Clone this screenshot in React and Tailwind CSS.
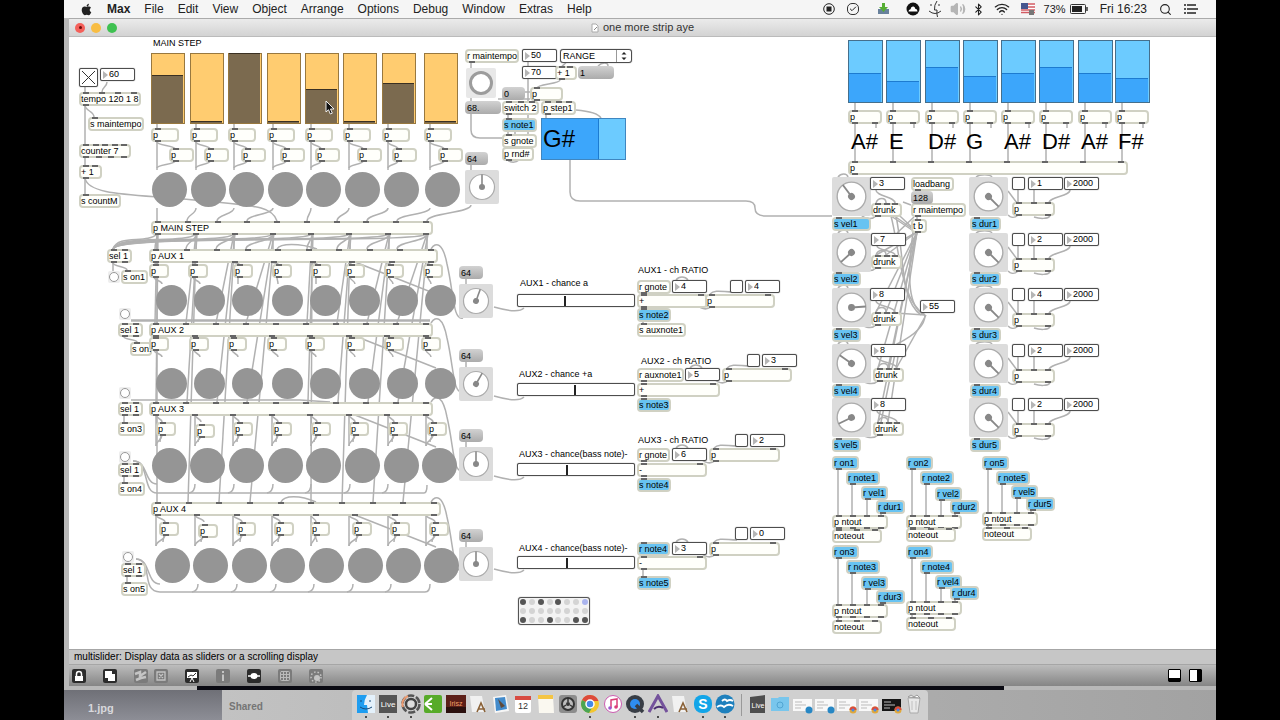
import React, { useState } from 'react';
import { Bluetooth, Check, Grid3x3, Search, Volume2, Wifi } from 'lucide-react';
import { FaApple } from 'react-icons/fa';

// patch coordinates of the top left corner of the visible canvas
const ORIGIN = { x: 69, y: 37 };

const place = (x, y, w, h) => ({ left: x - ORIGIN.x, top: y - ORIGIN.y, width: w, height: h });

const MENUS = ['File', 'Edit', 'View', 'Object', 'Arrange', 'Options', 'Debug', 'Window', 'Extras', 'Help'];

const STEP_X = [151, 190, 228, 267, 305, 343, 382, 424];
const STEP_LEVELS = [48, 2, 70, 2, 34, 2, 40, 2];
const STEP_P2_X = [169, 204, 241, 280, 315, 357, 392, 438];
const NOTE_X = [848, 886, 925, 963, 1001, 1039, 1078, 1115];
const NOTE_LEVELS = [29, 21, 35, 26, 29, 35, 29, 24];
const NOTES = ['A#', 'E', 'D#', 'G', 'A#', 'D#', 'A#', 'F#'];

const CIRCLE_ROWS = [
  { y: 190, d: 35, xs: [170, 209, 247, 286, 324, 363, 402, 443] },
  { y: 301, d: 31, xs: [172, 210, 248, 288, 326, 365, 403, 441] },
  { y: 384, d: 31, xs: [172, 210, 248, 288, 326, 365, 403, 441] },
  { y: 466, d: 35, xs: [170, 208, 247, 286, 324, 363, 402, 440] },
  { y: 566, d: 35, xs: [173, 211, 250, 288, 327, 366, 404, 442] },
];

const P_ROWS = [
  { y: 264, xs: [149, 188, 233, 272, 311, 345, 384, 423] },
  { y: 337, xs: [149, 189, 227, 267, 305, 345, 384, 421] },
  { y: 422, xs: [156, 195, 233, 272, 311, 349, 388, 427] },
  { y: 522, xs: [159, 198, 236, 274, 310, 352, 390, 429] },
];

// text, x, y, width, inlets, outlets
const BOXES = [
  ['tempo 120 1 8', 79, 92, 62, 4, 1],
  ['s maintempo', 88, 117, 56, 1, 0],
  ['counter 7', 79, 144, 52, 5, 4],
  ['+ 1', 79, 165, 23, 2, 1],
  ['s countM', 79, 194, 42, 1, 0],
  ['sel 1', 107, 249, 25, 2, 2],
  ['s on1', 121, 270, 27, 1, 0],
  ['sel 1', 118, 323, 25, 2, 2],
  ['s on.', 130, 342, 22, 1, 0],
  ['sel 1', 118, 402, 25, 2, 2],
  ['s on3', 118, 422, 27, 1, 0],
  ['sel 1', 118, 463, 25, 2, 2],
  ['s on4', 118, 482, 27, 1, 0],
  ['sel 1', 121, 563, 25, 2, 2],
  ['s on5', 121, 582, 27, 1, 0],
  ['p MAIN STEP', 151, 221, 282, 10, 8],
  ['p AUX 1', 149, 249, 289, 10, 8],
  ['p AUX 2', 149, 323, 284, 10, 8],
  ['p AUX 3', 149, 402, 284, 10, 8],
  ['p AUX 4', 151, 502, 290, 10, 8],
  ['r maintempo', 465, 49, 54, 0, 1],
  ['p', 530, 87, 33, 1, 1],
  ['switch 2', 502, 101, 37, 3, 1],
  ['p step1', 541, 101, 35, 3, 1],
  ['s gnote', 502, 134, 35, 1, 0],
  ['p rnd#', 502, 147, 32, 0, 1],
  ['r gnote', 637, 280, 34, 0, 1],
  ['+', 637, 294, 71, 2, 1],
  ['p', 705, 294, 70, 2, 1],
  ['s auxnote1', 637, 323, 49, 1, 0],
  ['r auxnote1', 637, 368, 47, 0, 1],
  ['+', 637, 383, 83, 2, 1],
  ['p', 722, 368, 70, 2, 1],
  ['r gnote', 637, 448, 33, 0, 1],
  ['-', 637, 463, 70, 2, 1],
  ['p', 709, 448, 71, 2, 1],
  ['-', 637, 556, 70, 2, 1],
  ['p', 709, 542, 71, 2, 1],
  ['p', 848, 161, 280, 8, 1],
  ['loadbang', 911, 177, 43, 0, 1],
  ['r maintempo', 911, 203, 55, 0, 1],
  ['t b', 911, 219, 16, 1, 1],
];

const BLUE_BOXES = [
  ['s note1', 502, 118, 35],
  ['s note2', 637, 308, 34],
  ['s note3', 637, 398, 34],
  ['s note4', 637, 478, 34],
  ['s note5', 637, 576, 34],
  ['r note4', 637, 542, 33],
];

const NUMBERS = [
  ['60', 100, 68, 'tempo'],
  ['50', 522, 49, 'low'],
  ['70', 522, 66, 'high'],
  ['4', 672, 280, 'aux1 offset'],
  ['4', 745, 280, 'aux1 ratio'],
  ['5', 685, 368, 'aux2 offset'],
  ['3', 762, 354, 'aux2 ratio'],
  ['6', 672, 448, 'aux3 offset'],
  ['2', 750, 434, 'aux3 ratio'],
  ['3', 672, 542, 'aux4 offset'],
  ['0', 750, 527, 'aux4 ratio'],
  ['55', 920, 300, 'drunk size'],
];

const TOGGLES = [[730, 280], [747, 354], [735, 434], [735, 527]];

const MESSAGES = [
  ['1', 578, 66, 36],
  ['0', 502, 87, 23],
  ['68.', 465, 101, 36],
  ['64', 465, 152, 23],
  ['64', 459, 266, 24],
  ['64', 459, 349, 24],
  ['64', 459, 429, 24],
  ['64', 459, 529, 24],
  ['128', 911, 191, 22],
];

const COMMENTS = [
  ['MAIN STEP', 153, 37],
  ['AUX1 - chance a', 520, 277],
  ['AUX2 - chance +a', 519, 368],
  ['AUX3 - chance(bass note)-', 519, 448],
  ['AUX4 - chance(bass note)-', 519, 542],
  ['AUX1 - ch RATIO', 638, 264],
  ['AUX2 - ch RATIO', 641, 355],
  ['AUX3 - ch RATIO', 638, 434],
];

const CHANCES = [
  { y: 294, value: 40 },
  { y: 383, value: 49 },
  { y: 463, value: 42 },
  { y: 556, value: 42 },
];

const DIALS = [
  [465, 170, 34, 0],
  [459, 284, 34, 20],
  [459, 367, 34, 30],
  [459, 447, 34, 0],
  [459, 547, 34, 0],
];

const VOICES = [
  { y: 177, vel: '3', nx: 870, dx: 871, drunk: 203, send: 217, angle: -37, dur: '1', sw: 39 },
  { y: 233, vel: '7', nx: 871, dx: 871, drunk: 255, send: 272, angle: -132, dur: '2', sw: 29 },
  { y: 288, vel: '8', nx: 870, dx: 871, drunk: 312, send: 328, angle: 86, dur: '4', sw: 29 },
  { y: 344, vel: '8', nx: 871, dx: 873, drunk: 368, send: 384, angle: -55, dur: '2', sw: 29 },
  { y: 398, vel: '8', nx: 871, dx: 873, drunk: 422, send: 438, angle: -116, dur: '2', sw: 29 },
];

const OUTPUTS = [
  { n: 1, x: 832, ys: [456, 471, 486, 500, 515, 529] },
  { n: 2, x: 906, ys: [456, 471, 487, 500, 515, 528] },
  { n: 5, x: 982, ys: [456, 471, 485, 497, 512, 527] },
  { n: 3, x: 832, ys: [545, 560, 576, 590, 604, 620] },
  { n: 4, x: 906, ys: [545, 560, 575, 586, 601, 617] },
];

const SMALL_BANGS = [[114, 277], [125, 314], [125, 393], [125, 457], [128, 557]];

const MATRIX = ['10101002', '00000000', '10010011'];

// a cord that leaves and enters vertically
const cord = (x1, y1, x2, y2, d = (y2 - y1) / 2) => `M${x1} ${y1}C${x1} ${y1 + d} ${x2} ${y2 - d} ${x2} ${y2}`;

const MAIN_OUT = [157, 196, 234, 273, 312, 350, 389, 427];
const AUX_IN = [155, 186, 216, 246, 307, 337, 367, 397];
const AUX4_IN = [157, 188, 219, 250, 311, 342, 373, 403];

function buildCords() {
  const c = [];
  c.push('M85 87V92', cord(107, 82, 102, 92), 'M85 105V144', cord(85, 105, 94, 117), 'M85 157V165M85 178V194');
  c.push('M85 178C88 196 135 194 194 200S272 205 277 221');
  STEP_X.forEach((x, i) => {
    const p2 = STEP_P2_X[i] + 6;
    c.push(`M${x + 6} 124V129M${x + 6} 142V170`, cord(x + 6, 142, p2, 149), cord(p2, 161, x + 6, 168));
    c.push(cord(x + 6, 208, [157, 187, 217, 247, 307, 337, 367, 397][i], 221));
    c.push(`M${MAIN_OUT[i]} 234L${MAIN_OUT[i]} 263`);
    c.push(`M${MAIN_OUT[i]} 234C${MAIN_OUT[i] - 10} 244 118 234 113 249`);
    c.push(cord(MAIN_OUT[i], 234, AUX_IN[i], 249));
    c.push(`M${MAIN_OUT[i]} 234L${AUX_IN[i]} 323`, `M${MAIN_OUT[i] + 1} 234L${AUX_IN[i] + 1} 402`, `M${MAIN_OUT[i]} 249L${AUX4_IN[i]} 502`);
  });
  c.push(cord(471, 205, 427, 221));
  P_ROWS.forEach((r, k) => {
    const top = [262, 336, 415, 515][k];
    r.xs.forEach((x, i) => {
      const cx = CIRCLE_ROWS[k + 1].xs[i] - 10;
      const out = MAIN_OUT[i] - 1;
      c.push(cord(out, top, x + 6, r.y), cord(x + 5, r.y + 13, cx, r.y + 20));
      if (k > 1) c.push(`M${out} ${top}V${r.y + 24}`, cord(x + 6, r.y + 13, out, r.y + 24));
    });
    const d = [249, 323, 402, 502][k];
    c.push(`M355 ${top}L436 ${top + 32}`);
    c.push(`M431 ${d}C436 ${d - 8} 443 ${d - 6} 447 ${d + 15}C454 ${d + 45} 453 ${d + 72} 463 ${d + 69}`);
    c.push(`M494 ${CHANCES[k].y + 13}C508 ${CHANCES[k].y + 17} 520 ${CHANCES[k].y + 18} 524 ${CHANCES[k].y + 14}`);
    c.push(`M466 ${DIALS[k + 1][1] - 6}v6`);
    const p = BOXES.filter((b) => b[0] === 'p' && b[1] > 700 && b[1] < 730)[k];
    c.push(`M${p[1] + 5} ${p[2]}C${p[1] + 10} ${p[2] - 5} ${p[1] + 18} ${p[2] - 2} ${p[1] + 28} ${p[2] - 2}`);
    c.push(`M${p[1] + 6} ${p[2] + 13}C${p[1]} ${p[2] + 17} ${p[1] - 10} ${p[2] + 14} ${p[1] - 8} ${p[2] + 5}`);
  });
  // feedback from the circles to the sel objects
  c.push('M131 320H430M131 321H430M131 400H300L330 402', 'M133 461C148 460 144 484 157 484', 'M133 461C150 461 142 493 157 493H424Q427 493 427 485');
  c.push('M136 559C151 559 146 584 160 584', 'M136 559C154 560 140 592 160 592H425Q430 592 430 584');
  [195, 234, 273, 311, 350, 388].forEach((x) => c.push(`M${x} 484Q${x} 492 ${x - 6} 493`, `M${x + 3} 584Q${x + 3} 591 ${x - 3} 592`));
  c.push('M277 249C280 243 300 243 317 249', 'M281 502C284 495 300 495 316 502');
  c.push(cord(113, 263, 113, 272), cord(113, 263, 127, 270), cord(124, 337, 137, 342), 'M124 415V422M124 476V482M127 576V582');
  // note picker
  c.push('M471 62V68', 'M471 98V101M498 99H530', 'M471 114V130Q471 138 480 138H502', 'M471 165V170', 'M528 62V101', cord(566, 62, 562, 67));
  c.push(cord(560, 80, 537, 88), 'M598 66C602 62 608 62 608 66', 'M576 110C588 111 598 113 601 118', 'M508 115V134M515 131V134M528 115V134', 'M508 160C510 163 516 163 519 160', 'M546 115V118', 'M525 92H530');
  c.push('M570 160V192Q570 201 580 201H746Q755 201 755 208Q755 216 766 216H832');
  c.push('M646 307V308M643 569V576M643 320V324');
  [[683, 280], [697, 368], [683, 448], [683, 542]].forEach(([x, y]) => c.push(`M${x - 7} ${y}C${x - 4} ${y - 4} ${x + 2} ${y - 4} ${x + 5} ${y}`));
  NOTE_X.forEach((x) => c.push(`M${x + 7} 103V161M${x + 28} 123v5`));
  VOICES.forEach((v) => {
    c.push(cord(v.nx + 6, v.y + 13, v.dx + 24, v.drunk), `M${v.dx + 5} ${v.drunk}C${v.dx + 7} ${v.drunk - 6} ${v.dx + 15} ${v.drunk - 6} ${v.dx + 15} ${v.drunk}`);
    c.push(`M${v.dx + 5} ${v.drunk + 13}C${v.dx} ${v.drunk + 18} 862 ${v.drunk + 15} 860 ${v.drunk + 10}`);
    c.push(`M1018 ${v.y + 13}V${v.y + 26}M1034 ${v.y + 13}V${v.y + 26}M1008 ${v.y + 14}L1017 ${v.y + 26}`);
    c.push(cord(1070, v.y + 13, 1049, v.y + 26), `M1018 ${v.y + 38}C1014 ${v.y + 42} 1010 ${v.y + 40} 1008 ${v.y + 38}M1034 ${v.y + 40}C1040 ${v.y + 42} 1048 ${v.y + 42} 1050 ${v.y + 39}`);
    c.push(`M838 ${v.y}C841 ${v.y - 4} 847 ${v.y - 4} 848 ${v.y}M976 ${v.y}C980 ${v.y - 3} 990 ${v.y - 3} 992 ${v.y}`);
    c.push(`M917 232L${v.dx + 5} ${v.drunk}`, `M917 232L${v.dx + 15} ${v.drunk}`);
  });
  c.push('M917 190V203', 'M917 216V219', 'M891 216L912 230M896 216C905 260 900 300 921 315', 'M891 216C900 250 900 300 925 315', 'M925 315C925 330 905 340 897 344L881 422', 'M926 315L897 367', 'M925 315L895 313', 'M876 299H903', 'M913 232C905 290 912 310 925 315', 'M903 202L911 205', 'M897 233L914 217');
  OUTPUTS.forEach(({ x, ys }) => {
    [6, 20, 35, 49].forEach((dx, i) => c.push(`M${x + dx} ${ys[i] + 13}V${ys[4]}`));
    c.push(`M${x + 6} ${ys[4] + 13}V${ys[5]}`);
  });
  return c;
}

const CORDS = buildCords();

function Tabs({ count, edge }) {
  if (!count) return null;
  return (
    <div className={`absolute left-[2px] right-[2px] flex justify-between pointer-events-none ${edge === 'in' ? '-top-[2px]' : '-bottom-[2px]'}`}>
      {Array.from({ length: count }, (_, i) => <span key={i} className="w-[6px] h-[2px] bg-[#666]" />)}
    </div>
  );
}

function Box({ text, x, y, w, ins = 0, outs = 0, blue }) {
  return (
    <div
      className={`absolute rounded-[4px] border-2 border-[#d0d1c3] text-[9px] leading-[10px] whitespace-nowrap ${blue ? 'bg-[#68c3f2]' : 'bg-[#fffffb]'}`}
      style={place(x, y, w, 14)}
    >
      {text}
      <Tabs count={ins} edge="in" />
      <Tabs count={outs} edge="out" />
    </div>
  );
}

function NumberBox({ value, x, y, label }) {
  const [val, setVal] = useState(value);
  return (
    <div className="absolute bg-white border border-[#4d4d4d] rounded-[2px] flex items-center shadow-[0_0_1px_#555]" style={place(x, y, 35, 13)}>
      <svg viewBox="0 0 5 8" className="w-[5px] h-[8px] ml-[2px] shrink-0"><path d="M0 0L5 4L0 8Z" fill="#b5b5b5" /></svg>
      <input
        type="text"
        aria-label={label}
        value={val}
        onChange={(e) => setVal(e.target.value)}
        className="w-full min-w-0 h-[11px] pl-px text-[9px] leading-[11px] bg-transparent outline-none"
      />
    </div>
  );
}

function Message({ text, x, y, w }) {
  return (
    <button className="absolute rounded-[4px] bg-linear-to-b from-[#d2d2d2] to-[#ababab] text-left text-[9px] leading-[12px] pl-[2px]" style={place(x, y, w, 13)}>
      {text}
    </button>
  );
}

function Toggle({ x, y, size, label, crossed }) {
  return (
    <div className="absolute" style={place(x, y, size, size)}>
      <input type="checkbox" aria-label={label} defaultChecked={crossed} className="appearance-none block w-full h-full bg-white border border-[#4d4d4d] rounded-[2px] shadow-[0_0_1px_#555]" />
      {crossed && (
        <svg viewBox="0 0 19 19" className="absolute inset-0 pointer-events-none"><path d="M3 3L16 16M16 3L3 16" stroke="#333" strokeWidth="1" /></svg>
      )}
    </div>
  );
}

function Dial({ x, y, size, angle, label }) {
  return (
    <div className="absolute bg-[#dcdcdc] rounded-[2px]" style={place(x, y, size, size)}>
      <svg viewBox="0 0 34 34" className="w-full h-full">
        <circle cx="17" cy="17" r="12.5" fill="#fff" stroke="#ababab" strokeWidth="1.2" />
        <g transform={`rotate(${angle} 17 17)`}>
          <path d="M17 17V4.5" stroke="#888" strokeWidth="1.6" />
          <circle cx="17" cy="17" r="3" fill="#888" />
        </g>
      </svg>
      <input type="range" aria-label={label} className="absolute inset-0 w-full h-full opacity-0" />
    </div>
  );
}

function Step({ x, y, w, h, level, blue, label }) {
  return (
    <div className={`absolute border flex items-end ${blue ? 'bg-[#6ccbff] border-[#456f8c]' : 'bg-[#ffcc70] border-[#98783f]'}`} style={place(x, y, w, h)}>
      <div
        className={`w-full mr-px border-t ${blue ? 'bg-[#3ca6fb] border-[#1d7bd0]' : 'bg-[#7b6a4f] border-[#3a3022]'}`}
        style={{ height: level }}
      />
      <input type="range" aria-label={label} max={h} defaultValue={level} className="absolute inset-0 w-full h-full opacity-0" />
    </div>
  );
}

function Patcher() {
  return (
    <main className="relative flex-1 min-h-0 overflow-hidden bg-white">
      <svg className="absolute inset-0 w-full h-full" fill="none" stroke="#b1b1b1" strokeWidth="1.5">
        <g transform={`translate(${-ORIGIN.x} ${-ORIGIN.y})`}>
          {CORDS.map((d, i) => <path key={i} d={d} />)}
        </g>
      </svg>

      {COMMENTS.map(([text, x, y]) => (
        <p key={text} className="absolute text-[9px] leading-[13px] whitespace-nowrap" style={place(x, y)}>{text}</p>
      ))}

      {CIRCLE_ROWS.map((r, k) => r.xs.map((x, i) => (
        <button key={`${k}-${i}`} aria-label={`Trigger ${k + 1}.${i + 1}`} className="absolute rounded-full bg-[#959595]" style={place(x - Math.round(r.d / 2), r.y - Math.round(r.d / 2), r.d, r.d)} />
      )))}

      {STEP_X.map((x, i) => <Step key={x} x={x} y={53} w={34} h={71} level={STEP_LEVELS[i]} label={`Main step ${i + 1}`} />)}
      {STEP_X.map((x) => <Box key={x} text="p" x={x} y={128} w={28} ins={1} outs={1} />)}
      {STEP_P2_X.map((x) => <Box key={x} text="p" x={x} y={148} w={25} ins={1} outs={1} />)}

      {BOXES.map(([text, x, y, w, ins, outs]) => <Box key={`${x}-${y}`} text={text} x={x} y={y} w={w} ins={ins} outs={outs} />)}
      {P_ROWS.map((r) => r.xs.map((x, i) => <Box key={`${x}-${r.y}`} text="p" x={x} y={i === 1 && r.y > 400 ? r.y + 2 : r.y} w={20} ins={1} outs={1} />))}
      {BLUE_BOXES.map(([text, x, y, w]) => <Box key={text} text={text} x={x} y={y} w={w} ins={1} blue />)}

      {SMALL_BANGS.map(([x, y]) => (
        <button key={y} aria-label="Bang" className="absolute rounded-[2px] bg-[#eee] p-px" style={place(x - 6, y - 6, 12, 12)}>
          <span className="block w-full h-full rounded-full bg-white border border-[#999]" />
        </button>
      ))}
      <button aria-label="Bang" className="absolute bg-[#e8e8e8] rounded-[2px] p-[3px]" style={place(466, 68, 30, 30)}>
        <span className="block w-full h-full rounded-full bg-white border-[3px] border-[#9c9c9c]" />
      </button>

      <Toggle x={79} y={68} size={19} label="Metro on" crossed />
      {TOGGLES.map(([x, y]) => <Toggle key={y} x={x} y={y} size={13} label="Toggle" />)}
      {NUMBERS.map(([value, x, y, label]) => <NumberBox key={label} value={value} x={x} y={y} label={label} />)}
      {MESSAGES.map(([text, x, y, w]) => <Message key={`${x}-${y}`} text={text} x={x} y={y} w={w} />)}
      <Box text="+ 1" x={555} y={66} w={22} ins={2} outs={1} />

      <div className="absolute" style={place(560, 49, 72, 14)}>
        <select aria-label="Range" className="appearance-none block w-full h-full bg-white border border-[#4d4d4d] rounded-[3px] shadow-[0_0_1px_#555] pl-[2px] text-[9px] leading-[11px]">
          <option>RANGE</option>
        </select>
        <svg viewBox="0 0 16 14" className="absolute right-0 top-0 w-[16px] h-[14px] pointer-events-none">
          <path d="M0.5 1V13" stroke="#999" />
          <path d="M5.500 5.500L8 3L10.500 5.500ZM5.500 8.500L8 11L10.500 8.500Z" fill="#222" />
        </svg>
      </div>

      <div className="absolute flex items-center border border-[#3f86c0] bg-[#6ccbff]" style={place(541, 118, 85, 42)}>
        <div className="w-[57px] h-full bg-[#3ca6fb] border-r border-[#1d7bd0] flex items-center pl-px text-[24px]">G#</div>
      </div>

      {DIALS.map(([x, y, size, angle]) => <Dial key={y} x={x} y={y} size={size} angle={angle} label="Chance dial" />)}
      {CHANCES.map(({ y, value }) => (
        <input
          key={y}
          type="range"
          aria-label="Chance"
          defaultValue={value}
          className="absolute appearance-none bg-white border border-[#4d4d4d] rounded-[2px] shadow-[0_0_1px_#555] [&::-webkit-slider-thumb]:appearance-none [&::-webkit-slider-thumb]:w-[2px] [&::-webkit-slider-thumb]:h-[10px] [&::-webkit-slider-thumb]:bg-[#222]"
          style={place(517, y, 118, 13)}
        />
      ))}

      <div className="absolute grid grid-cols-8 gap-x-[2px] items-center justify-items-center bg-[#f3f3f3] border border-[#555] rounded-[3px] px-px shadow-[0_0_1px_#555]" style={place(518, 597, 72, 28)}>
        {MATRIX.join('').split('').map((cell, i) => (
          <span
            key={i}
            className={`w-[6px] h-[6px] rounded-full ${cell === '1' ? 'bg-[#555]' : cell === '2' ? 'bg-[#aab4ee]' : 'bg-[#d4d4d4]'}`}
          />
        ))}
      </div>

      {NOTE_X.map((x, i) => <Step key={x} x={x} y={40} w={35} h={63} level={NOTE_LEVELS[i]} blue label={`Note ${i + 1}`} />)}
      {NOTE_X.map((x) => <Box key={x} text="p" x={x} y={110} w={34} ins={1} outs={2} />)}
      {NOTE_X.map((x, i) => (
        <p key={x} className="absolute text-[22px] leading-[26px]" style={place(x + 3, 129)}>{NOTES[i]}</p>
      ))}

      {VOICES.map((v, i) => (
        <React.Fragment key={v.y}>
          <Dial x={832} y={v.y} size={39} angle={v.angle} label={`Velocity ${i + 1}`} />
          <Box text="drunk" x={v.dx} y={v.drunk} w={31} ins={3} outs={1} />
          <NumberBox value={v.vel} x={v.nx} y={v.y} label={`Velocity value ${i + 1}`} />
          <Box text={`s vel${i + 1}`} x={832} y={v.send} w={v.sw} ins={1} blue />
          <Dial x={969} y={v.y} size={39} angle={135} label={`Duration ${i + 1}`} />
          <Toggle x={1012} y={v.y} size={13} label={`Voice ${i + 1}`} />
          <NumberBox value={v.dur} x={1028} y={v.y} label={`Minimum ${i + 1}`} />
          <NumberBox value="2000" x={1064} y={v.y} label={`Maximum ${i + 1}`} />
          <Box text="p" x={1012} y={v.y + 25} w={43} ins={3} outs={2} />
          <Box text={`s dur${i + 1}`} x={970} y={v.send} w={31} ins={1} blue />
        </React.Fragment>
      ))}

      {OUTPUTS.map(({ n, x, ys }) => (
        <React.Fragment key={n}>
          <Box text={`r on${n}`} x={x} y={ys[0]} w={27} outs={1} blue />
          <Box text={`r note${n}`} x={x + 14} y={ys[1]} w={34} outs={1} blue />
          <Box text={`r vel${n}`} x={x + 29} y={ys[2]} w={27} outs={1} blue />
          <Box text={`r dur${n}`} x={x + 44} y={ys[3]} w={29} outs={1} blue />
          <Box text="p ntout" x={x} y={ys[4]} w={56} ins={4} outs={4} />
          <Box text="noteout" x={x} y={ys[5]} w={50} ins={3} />
        </React.Fragment>
      ))}

      <svg viewBox="0 0 10 16" className="absolute w-[10px] h-[16px]" style={place(325, 100, 10, 16)}>
        <path d="M1 1V12L3.500 9.700L5.300 14L7.300 13.200L5.500 9H9Z" fill="#111" stroke="#fff" strokeWidth="0.9" />
      </svg>
    </main>
  );
}

function MenuBar() {
  return (
    <header className="h-[18px] shrink-0 flex items-center justify-between bg-[#f5f5f5] pl-4 pr-[18px] text-[12px] text-[#222]">
      <nav className="flex items-center gap-[14px] whitespace-nowrap">
        <FaApple size={13} />
        <button className="font-bold">Max</button>
        {MENUS.map((m) => <button key={m}>{m}</button>)}
      </nav>
      <div className="flex items-center whitespace-nowrap">
        <svg viewBox="0 0 12 12" className="w-3 h-3 mr-3"><circle cx="6" cy="6" r="5.300" fill="none" stroke="#222" /><rect x="3.500" y="3.500" width="5" height="5" fill="#222" /></svg>
        <span className="w-3 h-3 mr-[18px] border border-[#333] rounded-[5px] flex items-center justify-center"><Check size={8} strokeWidth={3} /></span>
        <svg viewBox="0 0 13 12" className="w-[13px] h-3 mr-4"><path d="M1 6H12V11H1Z" fill="#68819c" /><path d="M5 0H8V4H11L6.500 9L2 4H5Z" fill="#55ad32" /></svg>
        <svg viewBox="0 0 14 14" className="w-[14px] h-[14px] mr-2"><circle cx="7" cy="7" r="6.500" fill="#111" /><path d="M2.500 9.500Q2.500 7.500 4.500 7.300Q5 4 7.500 4.500Q9 4.800 9.300 6.800Q11.500 7 11.500 9.500Z" fill="#fff" /></svg>
        <svg viewBox="0 0 14 16" className="w-[14px] h-[16px] mr-2" fill="none" stroke="#333"><path d="M9 0Q6 4 6.500 9H9Q8.500 13 9.500 16M3 3V5M11 3V5M1 10Q7 15 13 10" /></svg>
        <Volume2 size={16} className="mr-[6px] text-[#b5b5b5] fill-[#b5b5b5]" />
        <Bluetooth size={13} className="mr-[9px]" />
        <Wifi size={16} className="mr-[11px]" />
        <svg viewBox="0 0 14 12" className="w-[14px] h-3 mr-[9px]">
          <rect width="14" height="10" fill="#fff" />
          <path d="M0 1H14M0 4H14M0 7H14M0 9.500H14" stroke="#d25b63" strokeWidth="1.300" />
          <rect width="7" height="6" fill="#46568f" />
          <rect x="8" y="7" width="5" height="5" fill="#777" />
        </svg>
        <span className="text-[11px]">73%</span>
        <svg viewBox="0 0 18 10" className="w-[18px] h-[10px] ml-1 mr-3"><rect x="0.500" y="0.500" width="15" height="9" rx="1" fill="none" stroke="#333" /><rect x="2" y="2" width="10" height="6" fill="#222" /><path d="M17 3V7" stroke="#333" strokeWidth="1.500" /></svg>
        <span className="mr-[12px]">Fri 16:23</span>
        <Search size={13} className="mr-[12px]" />
        <svg viewBox="0 0 14 10" className="w-[14px] h-[10px]" stroke="#222" strokeWidth="1.500"><path d="M0 1H2M3 1H12M0 5H2M3 5H14M0 9H2M3 9H12" /></svg>
      </div>
    </header>
  );
}

function ToolButton({ label, dim, children, className = '' }) {
  return (
    <button aria-label={label} className={`w-[14px] h-[14px] rounded-[2px] flex items-center justify-center ${dim ? 'bg-[#7b7b7b] text-[#bbb]' : 'bg-[#2b2b2b] text-white'} ${className}`}>
      {children}
    </button>
  );
}

function Toolbar() {
  return (
    <div className="h-[21px] shrink-0 flex items-center pl-[3px] pr-[14px] bg-linear-to-b from-[#bdbdbd] to-[#858585]">
      <ToolButton label="Lock">
        <svg viewBox="0 0 14 14"><path d="M3 7H11V12H3Z" fill="#fff" /><path d="M4.500 7V5A2.500 2.500 0 0 1 9.500 5V7" fill="none" stroke="#fff" strokeWidth="1.500" /></svg>
      </ToolButton>
      <ToolButton label="Presentation" className="ml-[17px]">
        <svg viewBox="0 0 14 14"><path d="M2 2H9V5H12V12H5V9H2Z" fill="#fff" /></svg>
      </ToolButton>
      <ToolButton label="Patch cords" dim className="ml-[17px]">
        <svg viewBox="0 0 14 14"><path d="M1 5L6 3V7L12 3M2 11L7 9L12 8" stroke="#c4c4c4" strokeWidth="2.500" fill="none" /></svg>
      </ToolButton>
      <ToolButton label="Close" dim className="ml-[6px]">
        <svg viewBox="0 0 14 14"><path d="M3 3H11V11H3ZM5 5L9 9M9 5L5 9" stroke="#c4c4c4" strokeWidth="1.300" fill="none" /></svg>
      </ToolButton>
      <ToolButton label="Inspector" className="ml-[17px]">
        <svg viewBox="0 0 14 14"><path d="M2 3H12V9H2Z" fill="#fff" /><path d="M5 13L7 9L9 13" stroke="#fff" fill="none" /><path d="M3 8L6 6L8 7L11 4" stroke="#333" fill="none" /></svg>
      </ToolButton>
      <ToolButton label="Info" dim className="ml-[17px]">
        <svg viewBox="0 0 14 14"><path d="M7 2V4M7 5.500V12" stroke="#c4c4c4" strokeWidth="2" /></svg>
      </ToolButton>
      <ToolButton label="Signal" className="ml-[17px]">
        <svg viewBox="0 0 14 14"><path d="M1 7H13" stroke="#fff" strokeWidth="1.500" /><ellipse cx="7" cy="7" rx="3.500" ry="3" fill="#fff" /></svg>
      </ToolButton>
      <ToolButton label="Grid" dim className="ml-[17px]"><Grid3x3 size={12} strokeWidth={2} /></ToolButton>
      <ToolButton label="Settings" dim className="ml-[17px]">
        <svg viewBox="0 0 14 14"><circle cx="8" cy="9" r="3" fill="#c4c4c4" /><circle cx="7" cy="8" r="5" fill="none" stroke="#c4c4c4" strokeWidth="1.500" strokeDasharray="1.500 2" /></svg>
      </ToolButton>
      <div className="ml-auto flex gap-[8px]">
        <button aria-label="Bottom panel" className="w-[13px] h-[13px] bg-white border border-black rounded-[1px] flex items-end"><span className="w-full h-[3px] bg-black" /></button>
        <button aria-label="Side panel" className="w-[13px] h-[13px] bg-white border border-black rounded-[1px] flex justify-end"><span className="w-[4px] h-full bg-black" /></button>
      </div>
    </div>
  );
}

const DOCK_APPS = [
  { name: 'Finder', run: true, art: <><path d="M1 1H19V19H1Z" fill="#e4f1fb" /><path d="M1 1H11Q8 6 8 11H11L12 19H1Z" fill="#1f9df0" /><path d="M5 6V8M14 6V8M4 13Q10 17 16 13" stroke="#174b7a" fill="none" /></> },
  { name: 'Live', run: true, art: <><path d="M1 1H19V19H1Z" fill="#555" /><text x="10" y="13" fontSize="8" fill="#fff" textAnchor="middle">Live</text></> },
  { name: 'Max', run: true, art: <><circle cx="10" cy="10" r="8.500" fill="none" stroke="#555" strokeWidth="2.500" strokeDasharray="7 2" /><circle cx="10" cy="10" r="5" fill="#ddd" stroke="#444" strokeWidth="2.500" /><path d="M2 13A8.500 8.500 0 0 1 7 2" fill="none" stroke="#eb9a70" strokeWidth="2" /></> },
  { name: 'Camtasia', art: <><rect x="1" y="1" width="18" height="18" rx="2" fill="#57ab29" /><path d="M2 10L9 4M2 10H9M2 10L9 16" stroke="#fff" strokeWidth="2" /></> },
  { name: 'IRIS', art: <><path d="M0 1H20V19H0Z" fill="#5c1f18" /><path d="M0 13H20V19H0Z" fill="#2b100e" /><text x="10" y="12" fontSize="7" fill="#f1a06a" textAnchor="middle">Irisz</text></> },
  { name: 'Documents', art: <><path d="M2 2H14L17 18H4Z" fill="#f1f1f1" /><path d="M9 18L13 9L17 18M10 15H17" stroke="#8a6238" fill="none" strokeWidth="1.600" /></> },
  { name: 'Mail', art: <><path d="M2 3L15 1L18 17L4 19Z" fill="#f6f6f6" /><path d="M4 4L14 3L16 15L5 17Z" fill="#438bcb" /><path d="M7 5L14 12L10 14Z" fill="#614a38" /></> },
  { name: 'Calendar', art: <><rect x="2" y="2" width="16" height="17" rx="2" fill="#fff" /><path d="M2 2H18V6H2Z" fill="#d84b42" /><text x="10" y="15" fontSize="9" fill="#333" textAnchor="middle">12</text></> },
  { name: 'Notes', art: <><path d="M2 1H17L18 19H3Z" fill="#faf8f0" /><path d="M2 1H17V5H2Z" fill="#f4c544" /></> },
  { name: 'Preferences', art: <><rect x="1" y="1" width="18" height="18" rx="3" fill="#8d8d8d" /><circle cx="10" cy="10" r="6" fill="#bbb" stroke="#333" strokeWidth="2" /><circle cx="10" cy="10" r="2" fill="#333" /><path d="M10 4V8M5 13L8 11M15 13L12 11" stroke="#333" strokeWidth="1.500" /></> },
  { name: 'Chrome', run: true, art: <><circle cx="10" cy="10" r="9" fill="#f3c62f" /><path d="M10 10L2 6A9 9 0 0 1 18.500 7H10Z" fill="#dd4a3b" /><path d="M10 10L2 6A9 9 0 0 0 9 19L13 12Z" fill="#4ba553" /><circle cx="10" cy="10" r="4" fill="#4489e8" stroke="#fff" strokeWidth="1.500" /></> },
  { name: 'iTunes', art: <><circle cx="10" cy="10" r="8.500" fill="#fff" stroke="#cc5cb1" /><path d="M8 14V6L14 5V13" stroke="#da3f79" strokeWidth="1.500" fill="none" /><circle cx="7" cy="14" r="1.800" fill="#9b58d0" /><circle cx="13" cy="13" r="1.800" fill="#da3f79" /></> },
  { name: 'QuickTime', run: true, art: <><circle cx="10" cy="10" r="9" fill="#383d45" /><circle cx="10" cy="10" r="5" fill="#2e8df0" /><path d="M11 11L18 18" stroke="#383d45" strokeWidth="3.500" /></> },
  { name: 'Avid', run: true, art: <><path d="M1 18L10 2L19 18" fill="none" stroke="#74529c" strokeWidth="3" /><path d="M6 15Q10 11 15 14" fill="none" stroke="#4b2d70" strokeWidth="2" /></> },
  { name: 'Text', art: <><path d="M2 2H14L17 18H4Z" fill="#f1f1f1" /><path d="M9 18L13 9L17 18M10 15H17" stroke="#8a6238" fill="none" strokeWidth="1.600" /></> },
  { name: 'Skype', run: true, art: <><rect x="1" y="1" width="18" height="18" rx="8" fill="#13a5e8" /><text x="10" y="15" fontSize="14" fontWeight="bold" fill="#fff" textAnchor="middle">S</text></> },
  { name: 'OpenOffice', run: true, art: <><circle cx="10" cy="10" r="9.500" fill="#1e80bd" /><path d="M7 7Q10 4 12 7Q15 5 18 7M2 13Q6 10 9 13Q13 9 18 12" fill="none" stroke="#fff" strokeWidth="1.800" /></> },
];

const DOCK_FILES = [
  { name: 'Live set', art: <><path d="M2 3L17 1V19H2Z" fill="#4e4e4e" /><text x="10" y="14" fontSize="7" fill="#fff" textAnchor="middle">Live</text></> },
  { name: 'Folder', art: <><path d="M1 4H8L9 3H19V17H1Z" fill="#79c6ec" /><circle cx="10" cy="11" r="3" fill="none" stroke="#51a5d2" /></> },
  { name: 'Window 1', thumb: 'blue' },
  { name: 'Window 2', thumb: 'blue' },
  { name: 'Window 3', thumb: 'chrome' },
  { name: 'Window 4', thumb: 'chrome' },
  { name: 'Window 5', thumb: 'dark' },
  { name: 'Trash', art: <><path d="M4 4H16L14 19H6Z" fill="#e8e8e8" stroke="#aaa" /><path d="M4 3L7 1L10 3L13 1L16 4Z" fill="#fff" stroke="#999" /><path d="M8 7V16M12 7V16" stroke="#c0c0c0" /></> },
];

function DockIcon({ name, art, thumb, run }) {
  return (
    <button aria-label={name} className="relative w-[20px] h-[20px] shrink-0">
      <svg viewBox="0 0 20 20" className="w-full h-full">
        {art}
        {thumb && (
          <>
            <path d="M0 5H19V17H0Z" fill={thumb === 'dark' ? '#151515' : '#f8f8f8'} />
            <path d="M2 8H9M2 11H13M2 14H8" stroke="#bbb" />
            <circle cx="16" cy="16" r="3.500" fill={thumb === 'blue' ? '#2787c4' : '#e1a83a'} />
            {thumb !== 'blue' && <><path d="M12.500 16A3.500 3.500 0 0 1 19.500 16Z" fill="#d94c3e" /><circle cx="16" cy="16" r="1.500" fill="#4489e8" /></>}
          </>
        )}
      </svg>
      {run && <span className="absolute left-[9px] -bottom-[4px] w-[2px] h-[2px] rounded-full bg-[#222]" />}
    </button>
  );
}

function Desktop() {
  return (
    <footer className="h-[30px] shrink-0 flex bg-[#aaa] relative">
      <div className="w-[158px] shrink-0 pl-6 pt-[9px] bg-linear-to-b from-[#6f7077] to-[#8d8e96] text-[11px] leading-[18px] font-bold text-[#d8d8dc]">1.jpg</div>
      <div className="flex-1 pl-[7px] pt-[8px] bg-linear-to-r from-[#c2c2c2] to-[#a2a2a2] text-[10px] leading-[18px] font-bold text-[#757575]">Shared</div>
      <div className="absolute inset-x-0 top-0 flex justify-center">
        <div className="h-[30px] w-[576px] rounded-t-[4px] bg-[#d0d0d0] flex items-start justify-between px-1 pt-[4px]">
          <div className="w-[379px] flex justify-between">{DOCK_APPS.map((a) => <DockIcon key={a.name} {...a} />)}</div>
          <span className="w-px h-[22px] bg-[#999]" />
          <div className="w-[176px] flex justify-between">{DOCK_FILES.map((a) => <DockIcon key={a.name} {...a} />)}</div>
        </div>
      </div>
    </footer>
  );
}

export default function App() {
  return (
    <div className="w-full h-screen bg-black px-16 font-['Liberation_Sans',Arial,sans-serif] text-black">
      <div className="h-full flex flex-col overflow-hidden bg-[#b8b8b8]">
        <MenuBar />
        <div className="flex-1 min-h-0 ml-[5px] flex flex-col border-t border-[#aaa]">
          <div className="h-[18px] shrink-0 relative flex items-center justify-center bg-linear-to-b from-[#ebebeb] to-[#d3d3d3] border-b border-[#bbb] text-[11px] text-[#333]">
            <div className="absolute left-[6px] flex gap-[6px]">
              <button aria-label="Close window" className="w-[10px] h-[10px] rounded-full bg-[#f4605a] flex items-center justify-center"><span className="w-[3px] h-[3px] rounded-full bg-[#6b0d0a]" /></button>
              <button aria-label="Minimize" className="w-[10px] h-[10px] rounded-full bg-[#f8bd43]" />
              <button aria-label="Zoom" className="w-[10px] h-[10px] rounded-full bg-[#3fc151]" />
            </div>
            <svg viewBox="0 0 8 10" className="w-[8px] h-[10px] mr-1"><path d="M1 1H5L7 3V9H1Z" fill="#fff" stroke="#aaa" /><path d="M3 7L6 4" stroke="#888" /></svg>
            <h1>one more strip aye</h1>
          </div>
          <Patcher />
          <p className="h-[16px] shrink-0 pl-[5px] bg-[#c6c6c6] border-t border-b border-[#a6a6a6] text-[10px] leading-[14px]">multislider: Display data as sliders or a scrolling display</p>
          <Toolbar />
        </div>
        <div className="h-[4px] shrink-0 flex justify-center"><div className="w-[807px] mr-[79px] bg-[#0a0a12]" /></div>
        <Desktop />
      </div>
    </div>
  );
}
